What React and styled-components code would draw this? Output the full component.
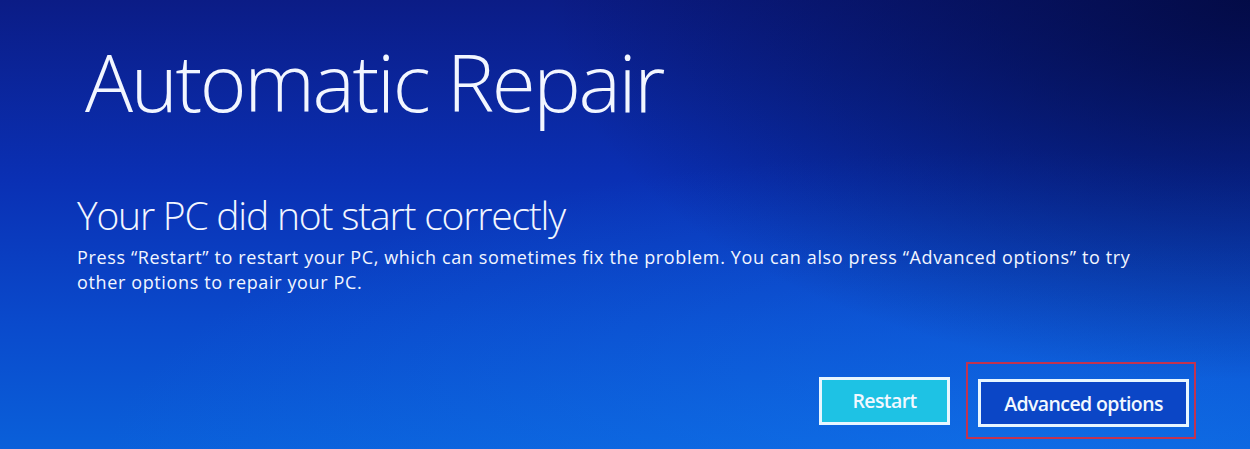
import styled, { createGlobalStyle } from "styled-components";

const GlobalStyle = createGlobalStyle`
  html, body {
    margin: 0;
    padding: 0;
  }
  body {
    font-family: "Open Sans", "Noto Sans", sans-serif;
  }
`;

const Screen = styled.div`
  width: 1250px;
  height: 449px;
  box-sizing: border-box;
  overflow: hidden;
  display: flex;
  flex-direction: column;
  padding: 33px 54px 0 77px;
  color: #f2f6ff;
  background:
    radial-gradient(ellipse 700px 380px at 1250px 0px, rgba(2, 8, 60, 0.85), rgba(2, 8, 60, 0) 100%),
    radial-gradient(ellipse 900px 320px at 1000px 470px, rgba(20, 120, 240, 0.5), rgba(20, 120, 240, 0) 100%),
    linear-gradient(180deg, #0b1c86 0%, #0a30b4 40%, #0a4acc 72%, #0a60da 100%);
`;

const Title = styled.h1`
  margin: 0 0 0 8px;
  font-size: 80px;
  font-weight: 300;
  line-height: 96px;
  letter-spacing: -2.4px;
`;

const Subtitle = styled.h2`
  margin: 62px 0 0;
  font-size: 39px;
  font-weight: 300;
  line-height: 48px;
  letter-spacing: -1.2px;
`;

const Message = styled.p`
  margin: 6px 0 0;
  width: 1070px;
  font-size: 18px;
  line-height: 25px;
  letter-spacing: 0.63px;
`;

const Actions = styled.div`
  margin-top: auto;
  margin-bottom: 10px;
  display: flex;
  justify-content: flex-end;
  align-items: center;
  gap: 16px;
`;

const Highlight = styled.div`
  display: flex;
  padding: 15px 5px 10px 10px;
  border: 2px solid #c23350;
`;

const Button = styled.button`
  box-sizing: border-box;
  height: 48px;
  padding: 0 12px;
  min-width: ${(p) => p.$width}px;
  border: 3px solid #e8f6ff;
  background: ${(p) => (p.$primary ? "#1ec2e4" : "#0b46c6")};
  color: #f2f8ff;
  font-family: "Open Sans", "Noto Sans", sans-serif;
  font-size: 19.5px;
  font-weight: 600;
  letter-spacing: -0.6px;
  cursor: pointer;
`;

const App = () => {
  return (
    <>
      <GlobalStyle />
      <Screen>
        <Title>Automatic Repair</Title>
        <Subtitle>Your PC did not start correctly</Subtitle>
        <Message>
          Press “Restart” to restart your PC, which can sometimes fix the
          problem. You can also press “Advanced options” to try other options
          to repair your PC.
        </Message>
        <Actions>
          <Button $primary $width={131}>
            Restart
          </Button>
          <Highlight>
            <Button $width={211}>Advanced options</Button>
          </Highlight>
        </Actions>
      </Screen>
    </>
  );
};

export default App;
